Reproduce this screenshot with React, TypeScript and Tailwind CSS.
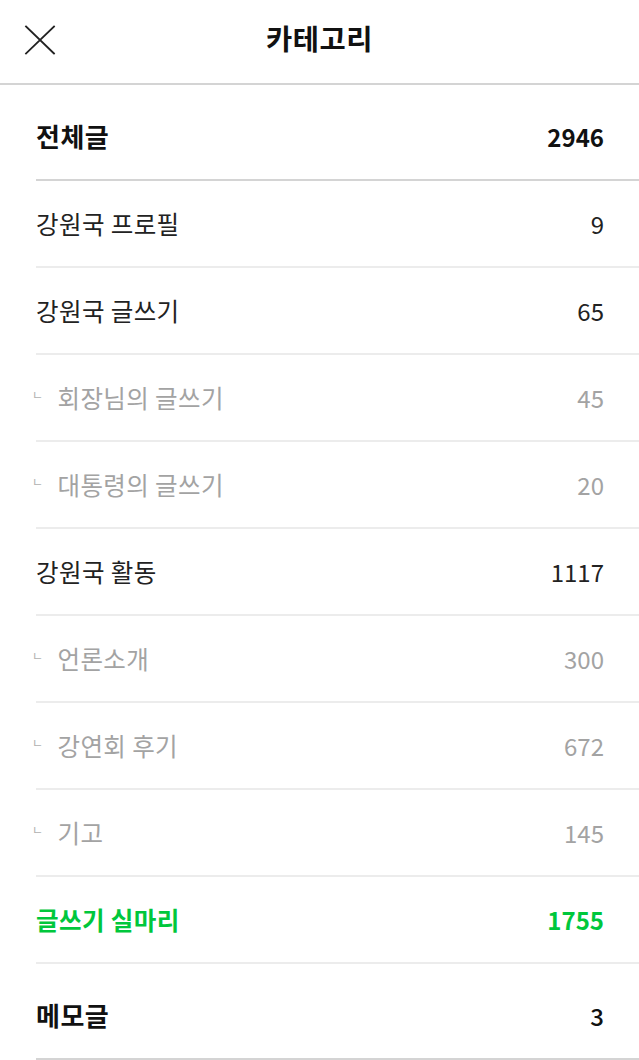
import React from "react";

type Row = {
  name: string;
  count: number;
  kind: "top" | "sub" | "accent";
};

const rows: Row[] = [
  { name: "강원국 프로필", count: 9, kind: "top" },
  { name: "강원국 글쓰기", count: 65, kind: "top" },
  { name: "회장님의 글쓰기", count: 45, kind: "sub" },
  { name: "대통령의 글쓰기", count: 20, kind: "sub" },
  { name: "강원국 활동", count: 1117, kind: "top" },
  { name: "언론소개", count: 300, kind: "sub" },
  { name: "강연회 후기", count: 672, kind: "sub" },
  { name: "기고", count: 145, kind: "sub" },
  { name: "글쓰기 실마리", count: 1755, kind: "accent" },
];

function CloseIcon() {
  return (
    <svg width="32" height="30" viewBox="0 0 32 30" fill="none" aria-hidden>
      <path d="M2 1.5 L30 28.5 M30 1.5 L2 28.5" stroke="#222" strokeWidth="1.8" strokeLinecap="square" />
    </svg>
  );
}

function CategoryRow({ row }: { row: Row }) {
  const tone =
    row.kind === "sub"
      ? "text-[#a3a3a3]"
      : row.kind === "accent"
      ? "text-[#00c73c] font-bold"
      : "text-[#222]";
  return (
    <li className="ml-9 h-[87px] border-b-2 border-[#ececec] pr-[35px] pt-[2px] flex items-center">
      <div className={`flex w-full items-baseline justify-between ${tone}`}>
        <div className="flex items-baseline text-[24.5px] tracking-[0.4px]">
          {row.kind === "sub" && (
            <span className="-ml-[4px] mr-[14px] text-[12px] relative -top-[8px] text-[#b0b0b0]">ㄴ</span>
          )}
          <span>{row.name}</span>
        </div>
        <span className="text-[24px]">{row.count}</span>
      </div>
    </li>
  );
}

export default function App() {
  return (
    <div
      className="w-[639px] min-h-[1060px] bg-white"
      style={{ fontFamily: '"Noto Sans CJK KR", "Noto Sans", sans-serif' }}
    >
      <header className="relative h-[85px] border-b-2 border-[#d4d4d4] flex items-center justify-center">
        <button className="absolute left-[24px] top-[25px]" aria-label="닫기">
          <CloseIcon />
        </button>
        <h1 className="text-[28.5px] font-bold tracking-[0.5px] text-[#111] -mt-[6px]">카테고리</h1>
      </header>
      <ul>
        <li className="ml-9 h-[96px] border-b-2 border-[#d4d4d4] pr-[35px] pt-[6px] flex items-center">
          <div className="flex w-full items-baseline justify-between text-[#111] font-bold">
            <span className="text-[26px] tracking-[0.5px]">전체글</span>
            <span className="text-[24px]">2946</span>
          </div>
        </li>
        {rows.map((r) => (
          <CategoryRow key={r.name} row={r} />
        ))}
        <li className="ml-9 h-[96px] border-b-2 border-[#d4d4d4] pr-[35px] pt-[6px] flex items-center">
          <div className="flex w-full items-baseline justify-between text-[#111]">
            <span className="text-[26px] font-bold tracking-[0.5px]">메모글</span>
            <span className="text-[24px] font-medium">3</span>
          </div>
        </li>
      </ul>
    </div>
  );
}
